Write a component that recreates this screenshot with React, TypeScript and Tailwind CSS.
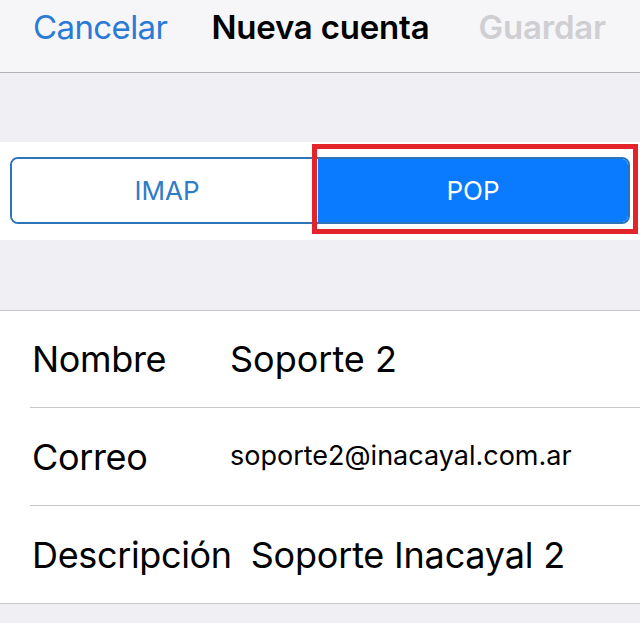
import React from "react";

const font = { fontFamily: "Inter, 'Liberation Sans', Arial, sans-serif" };

function Row({ label, value, small, height }: { label: string; value: string; small?: boolean; height: string }) {
  return (
    <div className="pl-[30px] bg-white">
      <div className={`flex items-center ${height} border-b border-[#c8c7cc]`}>
        <div className="w-[200px] shrink-0 pl-[2px] text-[36px] tracking-[-0.35px] text-black">{label}</div>
        <div className={`${small ? "text-[27px] tracking-[0px]" : "text-[36px] tracking-[0px]"} text-black`}>{value}</div>
      </div>
    </div>
  );
}

export default function App() {
  return (
    <div className="w-[640px] h-[623px] bg-[#efeff4] overflow-hidden" style={font}>
      {/* navigation bar */}
      <div className="h-[73px] bg-[#f6f6f8] border-b border-[#b2b2b2] flex items-center px-[33px] pb-[16px]">
        <div className="flex items-center w-full">
          <span className="text-[33px] text-[#2b7bd6] tracking-[-0.6px]">Cancelar</span>
          <span className="ml-[44px] text-[33px] font-semibold text-black tracking-[-0.2px]">Nueva cuenta</span>
          <span className="ml-auto mr-[1px] text-[33px] font-semibold text-[#cfcfd3] tracking-[-0.2px]">Guardar</span>
        </div>
      </div>

      <div className="h-[69px]" />

      {/* account type selector */}
      <div className="relative bg-white h-[98px] px-[10px] pt-[15px]">
        <div className="flex h-[67px] rounded-[8px] border-2 border-[#2d74b8] overflow-hidden">
          <div className="flex-1 flex items-center justify-center text-[26px] text-[#2e7cc6] bg-white">IMAP</div>
          <div className="flex-1 flex items-center justify-center text-[26px] text-white bg-[#0a7aff] -ml-[4px]">POP</div>
        </div>
        <div className="absolute left-[312px] top-[2px] w-[326px] h-[90px] border-[5px] border-[#e3242b]" />
      </div>

      <div className="h-[71px] border-b border-[#c8c7cc]" />

      {/* account fields */}
      <div className="border-b border-[#c8c7cc]">
        <Row label="Nombre" value="Soporte 2" height="h-[97px]" />
        <Row label="Correo" value="soporte2@inacayal.com.ar" small height="h-[98px]" />
        <div className="pl-[30px] bg-white">
          <div className="flex items-center h-[97px]">
            <div className="shrink-0 pl-[2px] text-[36px] tracking-[-0.35px] text-black">Descripción</div>
            <div className="ml-[19px] text-[36px] tracking-[-0.2px] text-black">Soporte Inacayal 2</div>
          </div>
        </div>
      </div>
    </div>
  );
}
